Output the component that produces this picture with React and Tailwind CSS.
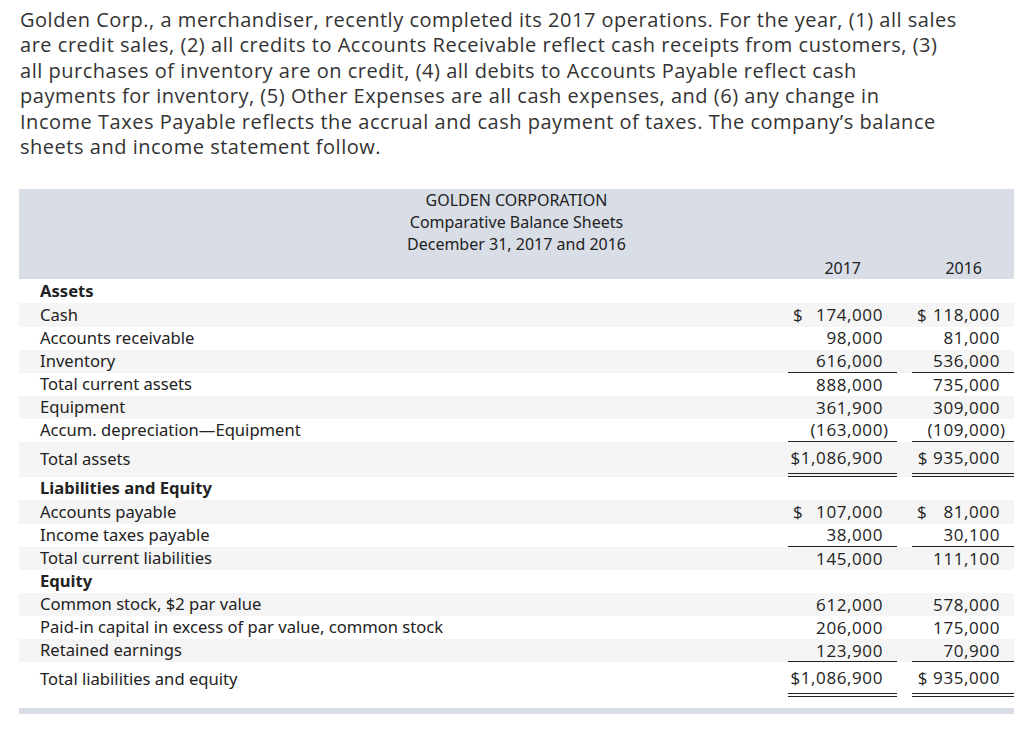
import React from "react";

const LABEL = "font-['Noto_Sans','Open_Sans',sans-serif] text-[16.6px] text-[#222]";
const NUM = "font-['Open_Sans','Noto_Sans',sans-serif] text-[17px] tracking-[0.6px] text-[#222]";

function Num({ v, dollar, line }) {
  let border = "";
  if (line === "single") border = "border-b border-[#222]";
  if (line === "double") border = "border-b-4 border-double border-[#222]";
  let text = v;
  let paren = false;
  if (v && v.endsWith(")")) {
    text = v.slice(0, -1);
    paren = true;
  }
  return (
    <div className={`h-full flex items-center ${dollar ? "justify-between pl-[5px]" : "justify-end"} pr-[14px] ${border} ${NUM}`}>
      {dollar && <span>$</span>}
      <span className="whitespace-nowrap">
        {text}
        {paren && <span className="inline-block w-0">)</span>}
      </span>
    </div>
  );
}

function Row({ label, bold, a, b, dollar, line, gray, h = "h-[23.15px]" }) {
  return (
    <div className={`flex ${h} ${gray ? "bg-[#f5f5f5]" : "bg-white"}`}>
      <div className={`flex-1 flex items-center pl-[21px] ${LABEL} ${bold ? "font-bold" : ""}`}>{label}</div>
      <div className="w-[109px] h-full">
        {a !== undefined && <Num v={a} dollar={dollar} line={line} />}
      </div>
      <div className="w-[15px]" />
      <div className="w-[102px] h-full">
        {b !== undefined && <Num v={b} dollar={dollar} line={line} />}
      </div>
    </div>
  );
}

export default function App() {
  return (
    <div className="w-[1024px] h-[732px] bg-white overflow-hidden">
      <p className="pl-[20px] pt-[7px] text-[20px] tracking-[0.52px] leading-[25.4px] text-[#333] font-['Open_Sans',sans-serif] whitespace-nowrap">
        Golden Corp., a merchandiser, recently completed its 2017 operations. For the year, (1) all sales<br />
        are credit sales, (2) all credits to Accounts Receivable reflect cash receipts from customers, (3)<br />
        all purchases of inventory are on credit, (4) all debits to Accounts Payable reflect cash<br />
        payments for inventory, (5) Other Expenses are all cash expenses, and (6) any change in<br />
        Income Taxes Payable reflects the accrual and cash payment of taxes. The company’s balance<br />
        sheets and income statement follow.
      </p>
      <div className="ml-[19px] w-[995px] mt-[30px]">
        <div className="h-[90px] bg-[#d9dde6] flex flex-col">
          <div className={`flex flex-col items-center leading-[22px] ${LABEL} text-[16px] pt-0`}>
            <div>GOLDEN CORPORATION</div>
            <div>Comparative Balance Sheets</div>
            <div>December 31, 2017 and 2016</div>
          </div>
          <div className={`flex mt-[2px] leading-[22px] ${LABEL} text-[16px]`}>
            <div className="flex-1" />
            <div className="w-[109px] text-right pr-[36px]">2017</div>
            <div className="w-[15px]" />
            <div className="w-[102px] text-right pr-[32px]">2016</div>
          </div>
        </div>
        <Row label="Assets" bold h="h-[24px]" />
        <Row label="Cash" gray a="174,000" b="118,000" dollar />
        <Row label="Accounts receivable" a="98,000" b="81,000" />
        <Row label="Inventory" gray a="616,000" b="536,000" line="single" />
        <Row label="Total current assets" a="888,000" b="735,000" />
        <Row label="Equipment" gray a="361,900" b="309,000" />
        <Row label="Accum. depreciation—Equipment" a="(163,000)" b="(109,000)" line="single" />
        <Row label="Total assets" gray a="$1,086,900" b="$ 935,000" line="double" h="h-[35px]" />
        <Row label="Liabilities and Equity" bold />
        <Row label="Accounts payable" gray a="107,000" b="81,000" dollar />
        <Row label="Income taxes payable" a="38,000" b="30,100" line="single" />
        <Row label="Total current liabilities" gray a="145,000" b="111,100" />
        <Row label="Equity" bold />
        <Row label="Common stock, $2 par value" gray a="612,000" b="578,000" />
        <Row label="Paid-in capital in excess of par value, common stock" a="206,000" b="175,000" />
        <Row label="Retained earnings" gray a="123,900" b="70,900" line="single" />
        <Row label="Total liabilities and equity" a="$1,086,900" b="$ 935,000" line="double" h="h-[35px]" />
        <div className="h-[11px]" />
        <div className="h-[6px] bg-[#d9dde6]" />
      </div>
    </div>
  );
}
